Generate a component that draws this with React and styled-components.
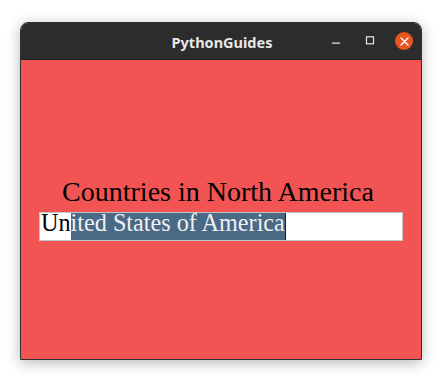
import React from 'react';
import styled, { createGlobalStyle } from 'styled-components';

const GlobalStyle = createGlobalStyle`
    html, body {
        margin: 0;
        padding: 0;
        background: #ffffff;
    }
`

const Page = styled.div`
    width: 444px;
    height: 383px;
    padding: 22px 0 0 20px;
    box-sizing: border-box;
`

const Window = styled.div`
    width: 402px;
    height: 338px;
    box-sizing: border-box;
    border: 1px solid #303030;
    border-radius: 8px 8px 0 0;
    overflow: hidden;
    display: flex;
    flex-direction: column;
    box-shadow: 0 3px 14px rgba(0, 0, 0, 0.28);
`

const TitleBar = styled.div`
    height: 37px;
    box-sizing: border-box;
    flex: none;
    background: #2c2c2c;
    position: relative;
    display: flex;
    align-items: center;
    justify-content: center;
    border-bottom: 1px solid #1e1e1e;
`

const Title = styled.span`
    font-family: "Noto Sans", "DejaVu Sans", sans-serif;
    font-weight: 700;
    font-size: 14.5px;
    color: #e8e8e8;
    margin-left: 2px;
    margin-top: 1px;
`

const Controls = styled.div`
    position: absolute;
    right: 0;
    top: 0;
    height: 100%;
    display: flex;
    align-items: center;
`

const ControlSlot = styled.div`
    width: 34px;
    height: 20px;
    display: flex;
    align-items: center;
    justify-content: center;
`

const Close = styled.div`
    width: 18px;
    height: 18px;
    border-radius: 50%;
    background: #e95420;
    display: flex;
    align-items: center;
    justify-content: center;
`

const Content = styled.div`
    flex: 1;
    background: #f25454;
    display: flex;
    flex-direction: column;
    align-items: center;
    padding-top: 116px;
    font-family: "Liberation Serif", "Times New Roman", serif;
`

const Label = styled.div`
    font-size: 28px;
    line-height: 32px;
    color: #000;
    margin-right: 6px;
`

const Entry = styled.div`
    width: 364px;
    height: 29px;
    box-sizing: border-box;
    border: 1px solid #c4c4c4;
    background: #fff;
    display: flex;
    align-items: stretch;
    padding-left: 1px;
    margin-top: 4px;
    font-size: 24.2px;
    line-height: 20px;
    white-space: nowrap;
`

const Plain = styled.span`
    color: #000;
`

const Selected = styled.span`
    background: #4a6984;
    color: #eef0f2;
    border-right: 1px solid #1a1a1a;
`

export default function App() {
    return (
        <>
            <GlobalStyle />
            <Page>
                <Window>
                    <TitleBar>
                        <Title>PythonGuides</Title>
                        <Controls>
                            <ControlSlot>
                                <svg width="10" height="10" viewBox="0 0 10 10">
                                    <rect x="1" y="6.5" width="8" height="1.2" fill="#e8e8e8" />
                                </svg>
                            </ControlSlot>
                            <ControlSlot>
                                <svg width="10" height="10" viewBox="0 0 10 10">
                                    <rect x="1.5" y="0.8" width="7" height="7" fill="none" stroke="#e8e8e8" strokeWidth="1.2" />
                                </svg>
                            </ControlSlot>
                            <ControlSlot>
                                <Close>
                                    <svg width="9" height="9" viewBox="0 0 9 9">
                                        <path d="M1 1 L8 8 M8 1 L1 8" stroke="#ffffff" strokeWidth="1.4" strokeLinecap="round" />
                                    </svg>
                                </Close>
                            </ControlSlot>
                        </Controls>
                    </TitleBar>
                    <Content>
                        <Label>Countries in North America</Label>
                        <Entry>
                            <Plain>Un</Plain>
                            <Selected>ited States of America</Selected>
                        </Entry>
                    </Content>
                </Window>
            </Page>
        </>
    );
}
